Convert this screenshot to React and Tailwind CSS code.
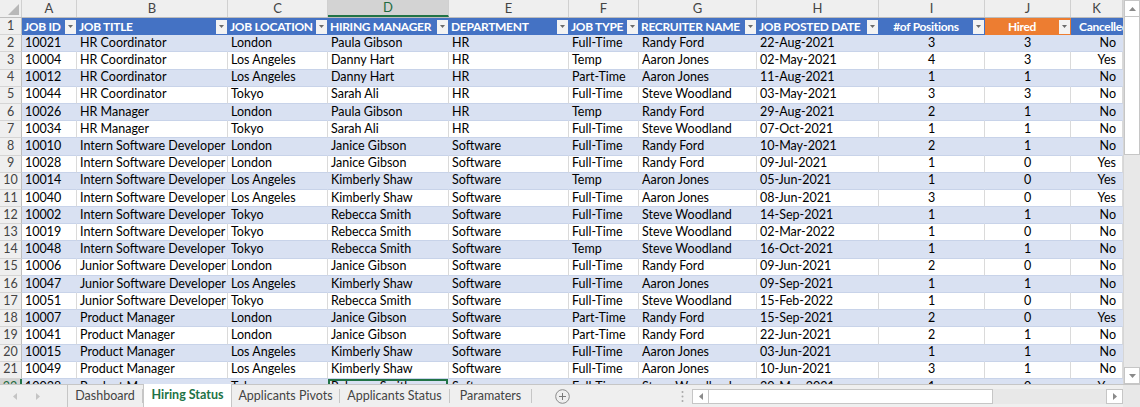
import React from 'react';

const cols = [
  { letter: 'A', w: 'w-[55px]', head: 'JOB ID', align: 'left' },
  { letter: 'B', w: 'w-[151px]', head: 'JOB TITLE', align: 'left' },
  { letter: 'C', w: 'w-[100px]', head: 'JOB LOCATION', align: 'left' },
  { letter: 'D', w: 'w-[121px]', head: 'HIRING MANAGER', align: 'left' },
  { letter: 'E', w: 'w-[120px]', head: 'DEPARTMENT', align: 'left' },
  { letter: 'F', w: 'w-[70px]', head: 'JOB TYPE', align: 'left' },
  { letter: 'G', w: 'w-[118px]', head: 'RECRUITER NAME', align: 'left' },
  { letter: 'H', w: 'w-[122px]', head: 'JOB POSTED DATE', align: 'left' },
  { letter: 'I', w: 'w-[106px]', head: '#of Positions', align: 'center' },
  { letter: 'J', w: 'w-[86px]', head: 'Hired', align: 'center' },
  { letter: 'K', w: 'w-[52px]', head: 'Cancelled', align: 'right' },
];

const rows = [
  ['10021', 'HR Coordinator', 'London', 'Paula Gibson', 'HR', 'Full-Time', 'Randy Ford', '22-Aug-2021', '3', '3', 'No'],
  ['10004', 'HR Coordinator', 'Los Angeles', 'Danny Hart', 'HR', 'Temp', 'Aaron Jones', '02-May-2021', '4', '3', 'Yes'],
  ['10012', 'HR Coordinator', 'Los Angeles', 'Danny Hart', 'HR', 'Part-Time', 'Aaron Jones', '11-Aug-2021', '1', '1', 'No'],
  ['10044', 'HR Coordinator', 'Tokyo', 'Sarah Ali', 'HR', 'Full-Time', 'Steve Woodland', '03-May-2021', '3', '3', 'No'],
  ['10026', 'HR Manager', 'London', 'Paula Gibson', 'HR', 'Temp', 'Randy Ford', '29-Aug-2021', '2', '1', 'No'],
  ['10034', 'HR Manager', 'Tokyo', 'Sarah Ali', 'HR', 'Full-Time', 'Steve Woodland', '07-Oct-2021', '1', '1', 'No'],
  ['10010', 'Intern Software Developer', 'London', 'Janice Gibson', 'Software', 'Full-Time', 'Randy Ford', '10-May-2021', '2', '1', 'No'],
  ['10028', 'Intern Software Developer', 'London', 'Janice Gibson', 'Software', 'Full-Time', 'Randy Ford', '09-Jul-2021', '1', '0', 'Yes'],
  ['10014', 'Intern Software Developer', 'Los Angeles', 'Kimberly Shaw', 'Software', 'Temp', 'Aaron Jones', '05-Jun-2021', '1', '0', 'Yes'],
  ['10040', 'Intern Software Developer', 'Los Angeles', 'Kimberly Shaw', 'Software', 'Full-Time', 'Aaron Jones', '08-Jun-2021', '3', '0', 'Yes'],
  ['10002', 'Intern Software Developer', 'Tokyo', 'Rebecca Smith', 'Software', 'Full-Time', 'Steve Woodland', '14-Sep-2021', '1', '1', 'No'],
  ['10019', 'Intern Software Developer', 'Tokyo', 'Rebecca Smith', 'Software', 'Full-Time', 'Steve Woodland', '02-Mar-2022', '1', '0', 'No'],
  ['10048', 'Intern Software Developer', 'Tokyo', 'Rebecca Smith', 'Software', 'Temp', 'Steve Woodland', '16-Oct-2021', '1', '1', 'No'],
  ['10006', 'Junior Software Developer', 'London', 'Janice Gibson', 'Software', 'Full-Time', 'Randy Ford', '09-Jun-2021', '2', '0', 'No'],
  ['10047', 'Junior Software Developer', 'Los Angeles', 'Kimberly Shaw', 'Software', 'Full-Time', 'Aaron Jones', '09-Sep-2021', '1', '1', 'No'],
  ['10051', 'Junior Software Developer', 'Tokyo', 'Rebecca Smith', 'Software', 'Full-Time', 'Steve Woodland', '15-Feb-2022', '1', '0', 'No'],
  ['10007', 'Product Manager', 'London', 'Janice Gibson', 'Software', 'Part-Time', 'Randy Ford', '15-Sep-2021', '2', '0', 'Yes'],
  ['10041', 'Product Manager', 'London', 'Janice Gibson', 'Software', 'Part-Time', 'Randy Ford', '22-Jun-2021', '2', '1', 'No'],
  ['10015', 'Product Manager', 'Los Angeles', 'Kimberly Shaw', 'Software', 'Full-Time', 'Aaron Jones', '03-Jun-2021', '1', '1', 'No'],
  ['10049', 'Product Manager', 'Los Angeles', 'Kimberly Shaw', 'Software', 'Full-Time', 'Aaron Jones', '10-Jun-2021', '3', '1', 'No'],
  ['10038', 'Product Manager', 'Tokyo', 'Rebecca Smith', 'Software', 'Full-Time', 'Steve Woodland', '30-Mar-2021', '1', '0', 'Yes'],
];

const alignClass = {
  left: 'justify-start pl-[3px]',
  center: 'justify-center',
  right: 'justify-end pr-[6px]',
};

const FilterButton = () => (
  <div className="w-[11px] h-[14px] mr-[1px] shrink-0 bg-[#f3f3f3] flex items-center justify-center">
    <svg width="5" height="3" viewBox="0 0 5 3">
      <path d="M0 0h5L2.5 3z" fill="#6b6b6b" />
    </svg>
  </div>
);

const Arrow = ({ dir }) => {
  const d = {
    up: 'M0 4L3.5 0 7 4z',
    down: 'M0 0h7L3.5 4z',
    left: 'M4 0v7L0 3.5z',
    right: 'M0 0l4 3.5L0 7z',
  }[dir];
  const vertical = dir === 'up' || dir === 'down';
  return (
    <svg width={vertical ? 7 : 4} height={vertical ? 4 : 7} viewBox={vertical ? '0 0 7 4' : '0 0 4 7'}>
      <path d={d} fill="#8a8a8a" />
    </svg>
  );
};

const Grid = () => (
  <div className="w-[1123px] overflow-hidden">
    {/* column letters */}
    <div className="flex h-[18px] bg-[#efefef] border-b border-[#bdbdbd]">
      <div className="w-[22px] shrink-0 relative border-r border-[#d0d0d0]">
        <svg className="absolute right-[2px] bottom-[2px]" width="11" height="11" viewBox="0 0 11 11">
          <path d="M11 0v11H0z" fill="#b8b8b8" />
        </svg>
      </div>
      {cols.map((c) => (
        <div
          key={c.letter}
          className={`${c.w} shrink-0 flex items-center justify-center text-[13px] border-r border-[#d0d0d0] ${
            c.letter === 'D'
              ? 'bg-[#d3d3d3] text-[#1e6b40] border-b-2 border-b-[#217346]'
              : 'text-[#444]'
          }`}
        >
          {c.letter}
        </div>
      ))}
    </div>

    {/* table header (row 1) */}
    <div className="flex h-[17.2px]">
      <div className="w-[22px] shrink-0 bg-[#efefef] border-r border-[#bdbdbd] border-b border-b-[#d5d5d5] flex items-center justify-center text-[12.5px] text-[#444]">
        1
      </div>
      {cols.map((c) => (
        <div
          key={c.letter}
          className={`${c.w} shrink-0 flex items-center overflow-hidden whitespace-nowrap text-white font-bold text-[12px] tracking-[-0.3px] ${
            c.letter === 'J' ? 'bg-[#ed7d31]' : 'bg-[#4472c4]'
          }`}
        >
          {c.letter === 'K' ? (
            <span className="pl-[8px]">{c.head}</span>
          ) : (
            <>
              <span
                className={`flex-1 flex overflow-hidden ${
                  c.align === 'left' ? 'pl-[2px]' : 'justify-center'
                }`}
              >
                {c.head}
              </span>
              <FilterButton />
            </>
          )}
        </div>
      ))}
    </div>

    {/* data rows */}
    {rows.map((r, i) => {
      const n = i + 2;
      const banded = n % 2 === 0;
      const last = n === 22;
      return (
        <div key={n} className="flex h-[17.2px]">
          <div
            className={`w-[22px] shrink-0 border-r border-b border-b-[#d5d5d5] flex items-center justify-center text-[12.5px] ${
              last ? 'bg-[#d3d3d3] text-[#1e6b40] border-r-2 border-r-[#217346]' : 'bg-[#efefef] text-[#444] border-r-[#bdbdbd]'
            }`}
          >
            {n}
          </div>
          {cols.map((c, j) => (
            <div
              key={c.letter}
              className={`${c.w} shrink-0 relative flex items-center overflow-hidden whitespace-nowrap text-[12.5px] text-black border-b ${
                alignClass[c.align]
              } ${
                banded
                  ? 'bg-[#d9e1f2] border-r border-r-[#d9e1f2] border-b-[#c8d3e9]'
                  : 'bg-white border-r border-r-[#dadada] border-b-[#c8d3e9]'
              }`}
            >
              {r[j]}
              {last && c.letter === 'D' && (
                <div className="absolute inset-0 border-2 border-[#217346]" />
              )}
            </div>
          ))}
        </div>
      );
    })}
  </div>
);

const VScroll = () => (
  <div className="w-[17px] shrink-0 bg-[#e8e8e8] flex flex-col border-l border-[#d6d6d6]">
    <div className="h-[17px] bg-white border border-[#c6c6c6] flex items-center justify-center">
      <Arrow dir="up" />
    </div>
    <div className="h-[138px] bg-white border-x border-b border-[#c6c6c6]" />
    <div className="flex-1" />
    <div className="h-[17px] bg-white border border-[#c6c6c6] flex items-center justify-center">
      <Arrow dir="down" />
    </div>
  </div>
);

const tabs = [
  { name: 'Dashboard', w: 'w-[75px]' },
  { name: 'Hiring Status', w: 'w-[89px]', active: true },
  { name: 'Applicants Pivots', w: 'w-[108px]' },
  { name: 'Applicants Status', w: 'w-[110px]' },
  { name: 'Paramaters', w: 'w-[82px]' },
];

const TabBar = () => (
  <div className="h-[23px] flex bg-[#efefef] border-t border-[#c6c6c6] text-[12.5px] text-[#444]">
    <div className="w-[68px] shrink-0 flex items-center gap-[19px] pl-[13px] border-r border-[#c6c6c6]">
      <svg width="4" height="7" viewBox="0 0 4 7">
        <path d="M4 0v7L0 3.5z" fill="#c4c4c4" />
      </svg>
      <svg width="4" height="7" viewBox="0 0 4 7">
        <path d="M0 0l4 3.5L0 7z" fill="#c4c4c4" />
      </svg>
    </div>
    {tabs.map((t) =>
      t.active ? (
        <div
          key={t.name}
          className={`${t.w} shrink-0 flex items-center justify-center whitespace-nowrap bg-white text-[#217346] font-bold border-x border-[#c6c6c6] -mt-px`}
        >
          {t.name}
        </div>
      ) : (
        <div
          key={t.name}
          className={`${t.w} shrink-0 flex items-center justify-center whitespace-nowrap border-r border-[#c6c6c6] my-[4px]`}
        >
          {t.name}
        </div>
      )
    )}
    <div className="w-[60px] shrink-0 flex items-center justify-center">
      <svg width="15" height="15" viewBox="0 0 15 15">
        <circle cx="7.5" cy="7.5" r="6.8" fill="none" stroke="#8a8a8a" strokeWidth="1" />
        <path d="M7.5 4v7M4 7.5h7" stroke="#7a7a7a" strokeWidth="1" />
      </svg>
    </div>
    <div className="flex-1 flex items-center justify-end pr-[8px]">
      <svg width="3" height="13" viewBox="0 0 3 13">
        <circle cx="1.5" cy="2" r="1" fill="#a8a8a8" />
        <circle cx="1.5" cy="6.5" r="1" fill="#a8a8a8" />
        <circle cx="1.5" cy="11" r="1" fill="#a8a8a8" />
      </svg>
    </div>
    <div className="w-[431px] shrink-0 flex items-center">
      <div className="w-full h-[15px] flex bg-[#e8e8e8]">
        <div className="w-[17px] bg-white border border-[#c6c6c6] flex items-center justify-center">
          <Arrow dir="left" />
        </div>
        <div className="w-[284px] bg-white border-y border-r border-[#c6c6c6]" />
        <div className="flex-1" />
        <div className="w-[17px] bg-white border border-[#c6c6c6] flex items-center justify-center">
          <Arrow dir="right" />
        </div>
      </div>
    </div>
    <div className="w-[17px] shrink-0 bg-[#e8e8e8]" />
  </div>
);

export default function App() {
  return (
    <div className="w-[1140px] h-[407px] overflow-hidden flex flex-col bg-white font-[Lato,'Liberation_Sans',sans-serif]">
      <div className="flex h-[384px] overflow-hidden">
        <Grid />
        <VScroll />
      </div>
      <TabBar />
    </div>
  );
}
